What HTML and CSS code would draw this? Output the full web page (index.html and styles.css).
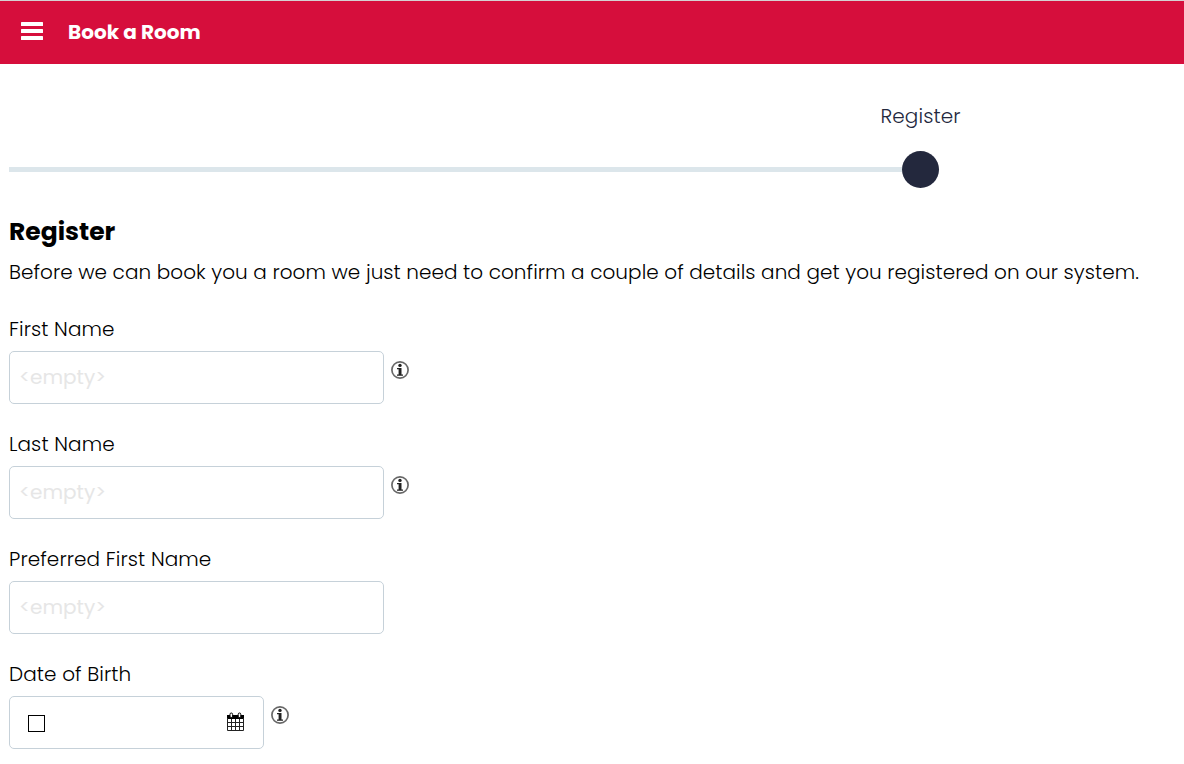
FILE: index.html
```html
<!DOCTYPE html>
<html lang="en">
<head>
<meta charset="utf-8">
<title>Book a Room</title>
<link rel="stylesheet" href="styles.css">
</head>
<body>
<svg class="defs" width="0" height="0" aria-hidden="true">
  <symbol id="info" viewBox="0 0 18 18">
    <circle cx="9" cy="9" r="8.1" fill="#fff" stroke="#686868" stroke-width="1.7"/>
    <circle cx="9" cy="4.4" r="1.7" fill="#222"/>
    <path d="M6 7h4.5v6.5H12v1.3H6v-1.3h1.6V8.3H6z" fill="#222"/>
  </symbol>
</svg>
<header class="topbar">
  <svg class="menu" width="22" height="18" viewBox="0 0 22 18"><rect width="22" height="4" rx=".5" fill="#fff"/><rect y="7" width="22" height="4" rx=".5" fill="#fff"/><rect y="14" width="22" height="4" rx=".5" fill="#fff"/></svg>
  <span class="brand">Book a Room</span>
</header>
<main class="page">
  <div class="progress">
    <div class="track"></div>
    <div class="step"><span class="step-label">Register</span><span class="dot"></span></div>
  </div>
  <h1 class="title">Register</h1>
  <p class="intro">Before we can book you a room we just need to confirm a couple of details and get you registered on our system.</p>
  <div class="field">
    <label class="label" for="first">First Name</label>
    <div class="row"><input class="input" id="first" placeholder="&lt;empty&gt;"><svg class="info"><use href="#info"/></svg></div>
  </div>
  <div class="field">
    <label class="label" for="last">Last Name</label>
    <div class="row"><input class="input" id="last" placeholder="&lt;empty&gt;"><svg class="info"><use href="#info"/></svg></div>
  </div>
  <div class="field">
    <label class="label" for="preferred">Preferred First Name</label>
    <div class="row"><input class="input" id="preferred" placeholder="&lt;empty&gt;"></div>
  </div>
  <div class="field">
    <span class="label">Date of Birth</span>
    <div class="row">
      <div class="date">
        <span class="check"></span>
        <svg class="calendar" width="18" height="19" viewBox="0 0 18 19">
          <path d="M1 3h17v4H1z" fill="#000"/>
          <path d="M1.5 6v12.5h16V6M1.5 10.5h16M1.5 14.5h16M5.5 7v11M9.5 7v11M13.5 7v11" fill="none" stroke="#222" stroke-width="1"/>
          <rect x="4" y="1" width="2.6" height="4.5" rx="1.3" fill="#fff" stroke="#000"/>
          <rect x="12.2" y="1" width="2.6" height="4.5" rx="1.3" fill="#fff" stroke="#000"/>
        </svg>
      </div>
      <svg class="info"><use href="#info"/></svg>
    </div>
  </div>
</main>
</body>
</html>
```
FILE: styles.css
```css
* { box-sizing: border-box; }
body { margin: 0; height: 764px; overflow: hidden; background: #fff; color: #000; font: 300 20px/30px Poppins, Inter, sans-serif; }
.defs { position: absolute; }
.topbar { height: 64px; display: flex; align-items: center; gap: 25px; padding: 0 21px 2px; background: #d60e3c; border-top: 1px solid #d5d0d2; }
.menu { margin-top: -1px; }
.brand { color: #fff; font-weight: 700; white-space: nowrap; }
.page { padding: 37px 9px 0; }
.progress { display: flex; align-items: flex-end; height: 87px; }
.track { width: 893px; height: 5px; margin-bottom: 16px; background: #dce6eb; }
.step { width: 37px; display: flex; flex-direction: column; align-items: center; gap: 20px; color: #23283d; }
.step-label { letter-spacing: 0.1px; }
.dot { width: 37.4px; height: 37.4px; margin-bottom: -0.4px; border-radius: 50%; background: #23283d; }
.title { margin: 26px 0 0; font-size: 25px; line-height: 36px; font-weight: 700; }
.intro { margin: 7px 0 27px; white-space: nowrap; letter-spacing: 0.052px; }
.field { height: 115px; }
.label { display: block; width: max-content; height: 37px; letter-spacing: 0.1px; }
.row { display: flex; gap: 7px; }
.input, .date { height: 53px; border: 1px solid #c6d1d9; border-radius: 5px; background: #fff; }
.input { width: 375px; padding: 0 9px 2px; font: inherit; font-weight: 400; }
.input::placeholder { color: #e6e6e6; opacity: 1; }
.info { width: 18px; height: 18px; margin-top: 10px; }
.date { width: 255px; display: flex; align-items: center; justify-content: space-between; padding: 0 19px 0 18px; }
.check { width: 17px; height: 17px; border: 1px solid #000; margin-top: 1px; }
.calendar { margin-top: -2px; }
```
